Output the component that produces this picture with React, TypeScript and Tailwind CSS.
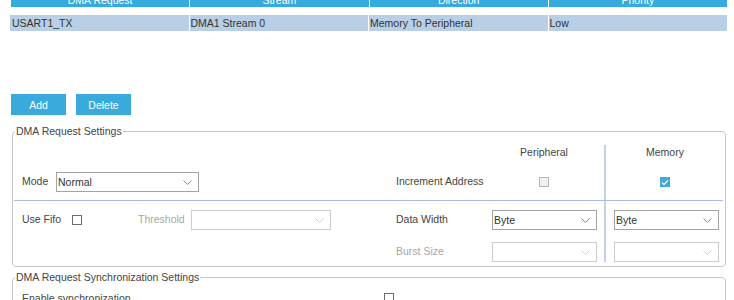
import React from "react";

const font = { fontFamily: '"Liberation Sans", Arial, sans-serif' };

function Chevron({ disabled }: { disabled?: boolean }) {
  return (
    <svg width="9" height="5" viewBox="0 0 9 5" className="shrink-0">
      <path d="M0.5 0.5 L4.5 4.5 L8.5 0.5" fill="none" stroke={disabled ? "#cfcfcf" : "#8a8a8a"} strokeWidth="1" />
    </svg>
  );
}

function Select({ value, width, disabled, ml }: { value?: string; width: string; disabled?: boolean; ml?: string }) {
  return (
    <div
      className={`${width} ${ml ?? ""} h-[20px] flex items-center justify-between pl-[1px] pr-[6px] bg-white border ${
        disabled ? "border-[#cdcdcd]" : "border-[#a3a3a3]"
      } text-[#333]`}
    >
      <span className="leading-[12px]">{value ?? ""}</span>
      <Chevron disabled={disabled} />
    </div>
  );
}

export default function App() {
  const cols = ["DMA Request", "Stream", "Direction", "Priority"];
  const row = ["USART1_TX", "DMA1 Stream 0", "Memory To Peripheral", "Low"];
  return (
    <div className="w-[734px] h-[300px] overflow-hidden bg-white text-[10.5px] text-[#444]" style={font}>
      {/* table */}
      <div className="pl-[11px] pr-[7px]">
        <div className="grid grid-cols-4 gap-x-px -mt-[13px] h-[20px]">
          {cols.map((c) => (
            <div key={c} className="bg-[#36a9dd] text-white flex items-end justify-center pb-[1px] leading-[12px]">
              {c}
            </div>
          ))}
        </div>
        <div className="grid grid-cols-4 gap-x-px mt-[8px] h-[16px] -ml-[1px]">
          {row.map((c, i) => (
            <div key={i} className={`bg-[#b9cfe6] text-[#333] flex items-center leading-[12px] ${i === 0 ? "pl-[2px]" : "pl-[1px]"}`}>
              {c}
            </div>
          ))}
        </div>
      </div>

      {/* buttons */}
      <div className="flex gap-[10px] pl-[11px] mt-[63px]">
        <button className="w-[55px] h-[21px] bg-[#3aa9dc] text-white leading-[12px]">Add</button>
        <button className="w-[55px] h-[21px] bg-[#3aa9dc] text-white leading-[12px]">Delete</button>
      </div>

      {/* DMA Request Settings */}
      <fieldset className="ml-[12px] mr-[8px] mt-[10px] border border-[#c6c6c6] rounded-[4px]">
        <legend className="ml-[2px] px-[1px] leading-[12px] text-[#444]">DMA Request Settings</legend>
        <div className="grid grid-cols-[383px_94px_108px_6px_2px_118px] grid-rows-[35px_28px_1px_29px_32px] pb-[4px]">
          {/* row 1 headers */}
          <div className="col-start-3 row-start-1 pt-[9px] leading-[12px] text-center">Peripheral</div>
          <div className="col-start-6 row-start-1 pt-[9px] leading-[12px] text-center">Memory</div>

          {/* separator */}
          <div className="col-start-5 row-start-1 row-span-5 mt-[8px] bg-[#c2d0ea]" />

          {/* row 2 */}
          <div className="col-start-1 row-start-2 flex items-start pl-[9px]">
            <div className="w-[34px] h-[20px] flex items-center">Mode</div>
            <Select value="Normal" width="w-[143px]" />
          </div>
          <div className="col-start-2 row-start-2 h-[20px] flex items-center">Increment Address</div>
          <div className="col-start-3 row-start-2 h-[20px] flex items-center justify-center">
            <div className="w-[10px] h-[10px] border border-[#b4b4b4] bg-[#efefef]" />
          </div>
          <div className="col-start-6 row-start-2 h-[20px] flex items-center justify-center">
            <div className="w-[10px] h-[10px] bg-[#3fa8dd] flex items-center justify-center">
              <svg width="8" height="7" viewBox="0 0 8 7">
                <path d="M1 3.6 L3 5.6 L7 1.2" fill="none" stroke="#fff" strokeWidth="1.3" />
              </svg>
            </div>
          </div>

          {/* row 3 line */}
          <div className="col-span-full row-start-3 mx-[1px] bg-[#aabde2]" />

          {/* row 4 */}
          <div className="col-start-1 row-start-4 pt-[9px] pl-[9px] flex items-start">
            <div className="w-[50px] h-[20px] flex items-center">Use Fifo</div>
            <div className="h-[20px] flex items-center">
              <div className="w-[10px] h-[10px] border border-[#6d6d6d] bg-white" />
            </div>
            <div className="ml-[56px] w-[53px] h-[20px] flex items-center text-[#a6a6a6]">Threshold</div>
            <Select width="w-[140px]" disabled />
          </div>
          <div className="col-start-2 row-start-4 pt-[9px]">
            <div className="h-[20px] flex items-center">Data Width</div>
          </div>
          <div className="col-start-3 row-start-4 pt-[9px]">
            <Select value="Byte" width="w-[105px]" ml="ml-[2px]" />
          </div>
          <div className="col-start-6 row-start-4 pt-[9px]">
            <Select value="Byte" width="w-[105px]" ml="ml-[8px]" />
          </div>

          {/* row 5 */}
          <div className="col-start-2 row-start-5 pt-[12px]">
            <div className="h-[20px] flex items-center text-[#a6a6a6]">Burst Size</div>
          </div>
          <div className="col-start-3 row-start-5 pt-[12px]">
            <Select width="w-[105px]" ml="ml-[2px]" disabled />
          </div>
          <div className="col-start-6 row-start-5 pt-[12px]">
            <Select width="w-[105px]" ml="ml-[8px]" disabled />
          </div>
        </div>
      </fieldset>

      {/* DMA Request Synchronization Settings */}
      <fieldset className="ml-[12px] mr-[8px] mt-[4px] border border-[#c6c6c6] rounded-[4px]">
        <legend className="ml-[2px] px-[1px] leading-[12px] text-[#444]">DMA Request Synchronization Settings</legend>
        <div className="flex items-center pl-[9px] pt-[9px] pb-[20px]">
          <div className="w-[362px] leading-[12px]">Enable synchronization</div>
          <div className="w-[10px] h-[10px] border border-[#6d6d6d] bg-white" />
        </div>
      </fieldset>
    </div>
  );
}
